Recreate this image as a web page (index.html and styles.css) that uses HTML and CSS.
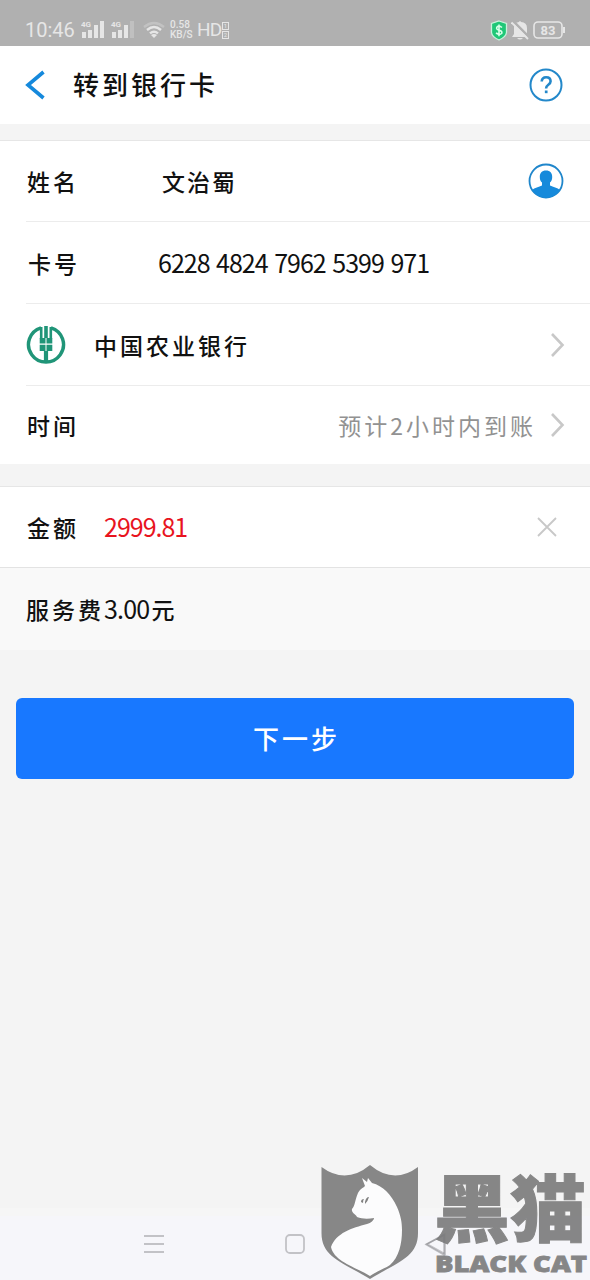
FILE: index.html
```html
<!DOCTYPE html>
<html lang="zh-CN">
<head>
<meta charset="utf-8">
<title>转到银行卡</title>
<link rel="stylesheet" href="styles.css">
</head>
<body>
<div class="screen">
  <div class="status">
    <span class="clock">10:46</span>
    <svg class="signals" width="54" height="20" viewBox="0 0 54 20">
      <g fill="#e6e6e6">
        <text x="0" y="7" class="net">4G</text><text x="30" y="7" class="net">4G</text>
        <path d="M1 12h4v6H1zM7 10h4v8H7zM13 5h4v13h-4zM19 1h4v17h-4zM31 12h4v6h-4zM37 10h4v8h-4zM43 5h4v13h-4z"/>
        <path opacity=".3" d="M49 1h4v17h-4z"/>
      </g>
    </svg>
    <svg class="wifi" width="22" height="18" viewBox="0 0 22 18" fill="none" stroke="#e6e6e6" stroke-width="2.4">
      <path opacity=".35" d="M1 6Q11-2 21 6"/><path d="M4 9Q11 3 18 9M7 12.400Q11 9 15 12.400"/><path fill="#e6e6e6" stroke="none" d="M8 14q3-2 6 0l-3 3z"/>
    </svg>
    <span class="speed"><span>0.58</span><span>KB/S</span></span>
    <span class="hd">HD</span>
    <span class="sims"><span class="sim">1</span><span class="sim">2</span></span>
    <span class="spacer"></span>
    <svg class="shield" width="18" height="21" viewBox="0 0 18 21"><path d="M9 1l7.500 2.500v9Q16 17 9 20 2 17 1.500 12.500v-9z" fill="#1fc777" stroke="#c9f3dc" stroke-width="1.300"/><path d="M12 7.500Q9 5 6.800 7.200 6 9.500 9 10.200q3.500.8 2.800 3Q9.500 15.500 6 13M9 4.500v11.800" fill="none" stroke="#d9ffe9" stroke-width="1.600"/></svg>
    <svg class="bell" width="18" height="21" viewBox="0 0 18 21"><path d="M3 5Q5 2 8 2q1-2 2 0 6 .5 6 6v6l1.500 3H1l2-3z M6 18h6Q9 21 6 18z" fill="#e6e6e6"/><path d="M2 1L18.500 17.500" stroke="#b0b0b0" stroke-width="2.500"/><path d="M.5 2.500L17 19" stroke="#e6e6e6" stroke-width="1.800"/></svg>
    <svg class="battery" width="34" height="20" viewBox="0 0 34 20"><rect x="2" y="2" width="28" height="16" rx="4" fill="none" stroke="#e6e6e6" stroke-width="1.600"/><path d="M32 7v6" stroke="#e6e6e6" stroke-width="2"/><text x="16" y="14.500" text-anchor="middle" class="charge">83</text></svg>
  </div>

  <header class="header">
    <svg class="back" width="22" height="30" viewBox="0 0 22 30"><path d="M19.500 2L4 15l15.500 13" fill="none" stroke="#1589dc" stroke-width="3.600"/></svg>
    <h1 class="title">转到银行卡</h1>
    <svg class="help" width="34" height="34" viewBox="0 0 34 34" fill="none" stroke="#2388ca"><circle cx="17" cy="17" r="15.500" stroke-width="2"/><path d="M12.700 13.500q.3-4.300 4.500-4.300 4.300 0 4.400 4 0 2-2.500 3.800-2 1.400-2 3.500" stroke-width="2.600"/><path d="M17.200 22.500v2.700" stroke-width="2.700"/></svg>
  </header>

  <main>
    <section class="list">
      <div class="row name"><span class="label">姓名</span><span class="value person">文治蜀</span>
        <svg class="contact" width="36" height="36" viewBox="0 0 36 36"><circle cx="18" cy="18" r="16.500" fill="#fff" stroke="#1f86cb" stroke-width="1.800"/><path d="M11.800 14c0-4 2-6.500 6.200-6.500s6.200 2.500 6.200 6.500c0 2.500-.7 4.200-2.200 5.500v3c3 1.500 7.500 2 10 4.500Q27 34.500 18 34.800 9 34.500 4 27c2.500-2.500 7-3 10-4.500v-3C12.500 18.200 11.800 16.500 11.800 14z" fill="#168adb"/></svg></div>
      <div class="row"><span class="label card">卡号</span><span class="number">6228 4824 7962 5399 971</span></div>
      <div class="row bank">
        <svg class="logo" width="40" height="40" viewBox="0 0 40 40"><g fill="none" stroke="#209578"><path d="M15 2.800A17.500 17.500 0 1 0 25 2.800" stroke-width="3.400"/><path d="M15.200 2v12M24.800 2v12" stroke-width="2.600"/></g><path d="M18.200 1h3.600v12h-3.600zM13.700 13h5.800v5.600h-5.800zM20.500 13h5.800v5.600h-5.800zM13.700 19.700h5.800V26h-5.800zM20.500 19.700h5.800V26h-5.800zM17.900 26h4.200v12h-4.200z" fill="#209578"/></svg>
        <span class="bank-name">中国农业银行</span>
        <svg class="arrow" width="16" height="26" viewBox="0 0 16 26"><path d="M3 2l10.500 11L3 24"/></svg></div>
      <div class="row time"><span class="label">时间</span><span class="eta">预计2小时内到账</span>
        <svg class="arrow" width="16" height="26" viewBox="0 0 16 26"><path d="M3 2l10.500 11L3 24"/></svg></div>
    </section>

    <section class="payment">
      <div class="amount"><span class="label">金额</span><span class="money">2999.81</span>
        <svg class="clear" width="22" height="22" viewBox="0 0 22 22"><path d="M2 2l18 18M20 2L2 20"/></svg></div>
      <div class="fee">服务费<span class="price">3.00</span>元</div>
    </section>
    <button class="next">下一步</button>
  </main>

  <nav class="nav">
    <svg width="22" height="22" viewBox="0 0 22 22"><path d="M1 3h20M1 11h20M1 19h20"/></svg>
    <svg width="22" height="22" viewBox="0 0 22 22"><rect x="2" y="2" width="18" height="18" rx="4"/></svg>
    <svg width="22" height="26" viewBox="0 0 22 26"><path d="M20 3v20L2 13z"/></svg>
  </nav>

  <svg class="watermark" width="275" height="120" viewBox="0 0 275 120">
    <path d="M6.500 7Q31 25 55 5q24 20 48 2v66c0 24-20 29-48 46C27 102 6.500 97 6.500 73z" fill="#808080" fill-opacity=".94"/>
    <path d="M47 18l5 4 1-4 4 5c11 3 19 11 25 24 4 9 5 16 5 23 0 14-3 27-12 35-6 4-13 6-20 11C38 106 19 101 16 87c5-14 21-19 36-23 4-1 7-4 7-6-6 1-12 1-17-1-1-3-6-4-5-8 3-3 3-9 6-16 2-4 5-5 7-7z" fill="#fcfcfd"/>
    <path d="M46 42q0-3 3-3-1 1-1 4zM50 42q1-5 4-5-1 4-4 7" fill="#808080"/>
    <g fill="#808080" stroke="#808080" opacity=".94">
      <text class="wm-cn" x="119" y="76" textLength="152" lengthAdjust="spacingAndGlyphs">黑猫</text>
      <text class="wm-en" x="120" y="112" textLength="152" lengthAdjust="spacingAndGlyphs">BLACK CAT</text>
    </g>
    <path d="M129 75v20L111 84.500z" fill="none" stroke="#77777c" stroke-opacity=".45" stroke-width="1.500"/>
  </svg>
</div>
</body>
</html>
```
FILE: styles.css
```css
* { box-sizing: border-box; }
body { margin: 0; }
svg { display: block; flex: none; }
.screen {
  position: relative;
  display: flex;
  flex-direction: column;
  width: 590px;
  height: 1280px;
  overflow: hidden;
  background: #f4f4f4;
  color: #111;
  font-family: "Noto Sans CJK SC", sans-serif;
}
main { flex: 1; }

.status {
  display: flex;
  align-items: center;
  height: 46px;
  padding: 14px 24px 0 25px;
  background: #b0b0b0;
  color: #e6e6e6;
  font-family: Roboto, sans-serif;
}
.clock { width: 56px; font-size: 20px; line-height: 32px; }
.net { font: bold 8px Roboto, sans-serif; }
.wifi { margin-left: 8px; }
.speed { display: flex; flex-direction: column; width: 27px; margin-left: 5px; font-size: 10px; font-weight: 500; line-height: 10px; }
.hd { width: 25px; font-size: 19px; letter-spacing: -.8px; line-height: 32px; }
.sims { display: flex; flex-direction: column; gap: 1px; }
.sim { width: 7px; height: 8px; border: 1px solid #e6e6e6; font-size: 6px; line-height: 6px; text-align: center; }
.spacer { flex: 1; }
.bell { margin-left: 3px; }
.battery { margin-left: 3px; }
.charge { fill: #e6e6e6; font: bold 13px Roboto, sans-serif; }

.header { display: flex; align-items: center; height: 78px; padding: 0 27px 0 24px; background: #fff; }
.title { flex: 1; margin: 0 0 0 27px; padding-bottom: 2px; font-size: 26px; font-weight: 500; letter-spacing: 3px; line-height: 40px; }

.list { margin-top: 16px; padding-left: 26px; border-top: 1px solid #e6e6e6; background: #fff; }
.row { display: flex; align-items: center; height: 82px; padding-right: 25px; border-bottom: 1px solid #ececec; font-size: 23px; line-height: 34px; }
.name { height: 81px; padding-right: 26px; }
.time { height: 78px; border-bottom: 0; }
.label { width: 132px; padding-left: 1px; font-size: 23px; font-weight: 500; letter-spacing: 3px; }
.person { flex: 1; padding-left: 4px; font-weight: 500; letter-spacing: 2px; }
.card { padding-left: 2px; }
.number { padding-bottom: 2px; font-size: 25px; letter-spacing: -1px; word-spacing: 2px; }
.bank-name { flex: 1; margin-left: 28px; font-weight: 500; letter-spacing: 3px; }
.eta { flex: 1; color: #929292; text-align: right; letter-spacing: 3px; margin-right: 13px; }
.arrow { fill: none; stroke: #c8c8c8; stroke-width: 2.600; }

.payment { margin-top: 22px; border-top: 1px solid #e6e6e6; background: #fff; }
.amount { display: flex; align-items: center; height: 81px; padding: 0 32px 0 26px; border-bottom: 1px solid #e3e3e3; }
.amount .label { width: 78px; }
.money { flex: 1; padding-bottom: 2px; color: #e8141e; font-size: 25px; letter-spacing: -1px; line-height: 34px; }
.clear { fill: none; stroke: #c8c8c8; stroke-width: 1.800; }
.fee { height: 82px; padding-left: 26px; background: #f9f9f9; font-size: 23px; font-weight: 500; letter-spacing: 3px; line-height: 80px; }
.price { font-size: 25px; font-weight: 400; letter-spacing: -.8px; margin-right: 2px; }
.next { display: block; width: 558px; height: 81px; margin: 48px auto 0; padding: 0 0 2px 3px; border: 0; border-radius: 6px; background: #1878ff; color: #fff; font: 500 26px "Noto Sans CJK SC", sans-serif; letter-spacing: 3px; }

.nav { display: flex; align-items: center; gap: 119px; height: 72px; padding: 0 0 8px 143px; background: #f6f6fa; border-top: 8px solid #f6f6f6; }
.nav svg { fill: none; stroke: #c2c2c6; stroke-width: 1.800; }

/* Brand mark lies over the navigation bar */
.watermark { position: absolute; right: 0; bottom: 0; }
.wm-cn { font: 900 73px "Noto Sans CJK SC", sans-serif; stroke-width: 1; }
.wm-en { font: 800 23px "Open Sans", sans-serif; stroke-width: .8; }
```
